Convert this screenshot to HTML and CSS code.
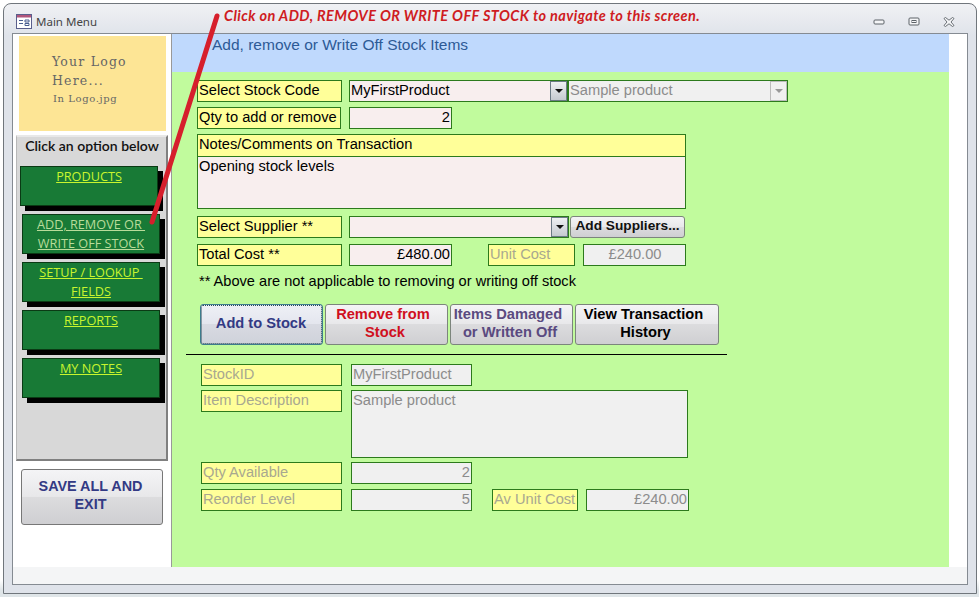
FILE: index.html
```html
<!DOCTYPE html>
<html lang="en">
<head>
<meta charset="utf-8">
<title>Main Menu</title>
<link rel="stylesheet" href="styles.css">
</head>
<body>
<div class="window">
  <header class="titlebar">
    <svg class="app-icon" width="16" height="15" viewBox="0 0 16 15">
      <rect x="0.5" y="0.5" width="15" height="14" fill="#fff" stroke="#5a5f8c"/>
      <rect x="1" y="1" width="14" height="2.5" fill="#b0557c"/>
      <path d="M3 6.5h4M3 9.5h4M9 6h4v2h-4zM9 9.5h4v2h-4z" fill="none" stroke="#4a5f90"/>
    </svg>
    <span class="window-title">Main Menu</span>
    <div class="window-controls">
      <svg width="12" height="6" viewBox="0 0 12 6"><rect x="1" y="1" width="10" height="4" rx="1" fill="#f4f5f7" stroke="#5c6268"/></svg>
      <svg width="12" height="9" viewBox="0 0 12 9"><rect x="1" y="1" width="10" height="7" rx="1" fill="#f4f5f7" stroke="#5c6268"/><rect x="4" y="3.500" width="4" height="2" fill="none" stroke="#5c6268"/></svg>
      <svg width="12" height="10" viewBox="0 0 12 10"><path d="M1 1.500L2.500 .5 6 3.200 9.500 .5 11 1.500 8 5l3 3.500L9.500 9.500 6 6.800 2.500 9.500 1 8.500 4 5z" fill="#f4f5f7" stroke="#5c6268" stroke-width=".9"/></svg>
    </div>
  </header>
  <div class="client">
    <div class="panes">
      <aside class="sidebar">
        <div class="logo">
          <p class="logo-big">Your Logo</p>
          <p class="logo-big">Here...</p>
          <p class="logo-small">In Logo.jpg</p>
        </div>
        <nav class="menu">
          <div class="menu-title">Click an option below</div>
          <a class="menu-btn menu-first">PRODUCTS</a>
          <a class="menu-btn menu-hover">ADD, REMOVE OR&nbsp;<br>WRITE OFF STOCK</a>
          <a class="menu-btn">SETUP / LOOKUP&nbsp;<br>FIELDS</a>
          <a class="menu-btn">REPORTS</a>
          <a class="menu-btn">MY NOTES</a>
        </nav>
        <button class="cmd save">SAVE ALL AND<br>EXIT</button>
      </aside>
      <main class="main">
        <div class="banner">Add, remove or Write Off Stock Items</div>
        <div class="form">
          <div class="row row-1">
            <div class="field label w-label">Select Stock Code</div>
            <div class="field input combo w-combo">MyFirstProduct<span class="drop"></span></div>
            <div class="field off combo w-combo2">Sample product<span class="drop drop-off"></span></div>
          </div>
          <div class="row row-2">
            <div class="field label w-label-s">Qty to add or remove</div>
            <div class="field input num w-num">2</div>
          </div>
          <div class="notes">
            <div class="field label notes-head">Notes/Comments on Transaction</div>
            <div class="field input notes-body">Opening stock levels</div>
          </div>
          <div class="row row-sup">
            <div class="field label w-label">Select Supplier **</div>
            <div class="field input combo w-combo-sup"><span class="drop"></span></div>
            <button class="cmd add-sup">Add Suppliers...</button>
          </div>
          <div class="row row-cost">
            <div class="field label w-label">Total Cost **</div>
            <div class="field input num w-num">£480.00</div>
            <div class="field label dim w-unit">Unit Cost</div>
            <div class="field off centre w-unitval">£240.00</div>
          </div>
          <p class="note">** Above are not applicable to removing or writing off stock</p>
          <div class="actions">
            <button class="cmd act focus">Add to Stock</button>
            <button class="cmd act red">Remove from&nbsp;<br>Stock</button>
            <button class="cmd act purple">Items Damaged&nbsp;<br>or Written Off</button>
            <button class="cmd act black wide">View Transaction&nbsp;<br>History</button>
          </div>
          <hr class="rule">
          <div class="lower">
            <div class="row">
              <div class="field label dim w-l2">StockID</div>
              <div class="field off w-v2">MyFirstProduct</div>
            </div>
            <div class="row row-desc">
              <div class="field label dim w-l2">Item Description</div>
              <div class="field off desc">Sample product</div>
            </div>
            <div class="row row-qty">
              <div class="field label dim w-l2">Qty Available</div>
              <div class="field off num w-v2">2</div>
            </div>
            <div class="row row-re">
              <div class="field label dim w-l2">Reorder Level</div>
              <div class="field off num w-v2">5</div>
              <div class="field label dim w-av">Av Unit Cost</div>
              <div class="field off num w-avval">£240.00</div>
            </div>
          </div>
        </div>
      </main>
      <div class="gutter"></div>
    </div>
    <footer class="status"></footer>
  </div>
</div>
<div class="callout">Click on ADD, REMOVE OR WRITE OFF STOCK to navigate to this screen.</div>
<svg class="arrow" width="979" height="597" viewBox="0 0 979 597"><line x1="217" y1="16" x2="152" y2="222" stroke="#d61f2c" stroke-width="5" stroke-linecap="round"/></svg>
</body>
</html>
```
FILE: styles.css
```css
* { box-sizing: border-box; }
html, body { margin: 0; height: 597px; width: 979px; overflow: hidden; background: #fff; }
body { padding: 3px 2px 3px 3px; font-family: "Liberation Sans", Arial, sans-serif; background: linear-gradient(#fff 0, #fff 580px, #dfe5e8 590px); }
p { margin: 0; }

.window { height: 591px; border: 1px solid #70767c; border-radius: 8px 8px 0 0; background: linear-gradient(#f0f1f4, #dfe3ea 32px, #dfe3ea); padding: 0 8px 8px 8px; display: flex; flex-direction: column; }
.titlebar { height: 29px; flex: none; display: flex; align-items: center; padding: 6px 0 0 4px; }
.app-icon { flex: none; }
.window-title { font: 11.500px "Noto Sans", "Open Sans", sans-serif; color: #444; margin-left: 4px; }
.window-controls { margin-left: auto; display: flex; align-items: center; gap: 23px; padding-right: 13px; }

.client { flex: 1; border: 1px solid #858b92; display: flex; flex-direction: column; background: #fff; min-height: 0; }
.panes { flex: 1; display: flex; min-height: 0; }
.status { height: 17px; flex: none; background: #f4f5f6; }
.gutter { flex: 1; background: #fff; }

.sidebar { width: 158px; flex: none; padding: 2px 0 0 3px; background: #fff; }
.logo { width: 147px; height: 95px; margin-left: 3px; background: #fde595; padding: 16px 0 0 33px; font-family: "DejaVu Serif", serif; color: #666; }
.logo-big { font-size: 12.500px; line-height: 19px; letter-spacing: 1.2px; }
.logo-small { font-size: 10px; line-height: 18px; padding-left: 1px; letter-spacing: .6px; }

.menu { width: 152px; height: 326px; margin-top: 4px; background: #d8d8d8; border-top: 2px solid #e8e8e8; border-right: 2px solid #808080; border-bottom: 2px solid #808080; border-left: 1px solid #b8b8b8; padding-left: 5px; }
.menu-title { font: 600 14px/18px "Lato", "Open Sans", sans-serif; color: #111; text-align: center; margin: 0 0 11px -3px; width: 146px; }
.menu-btn { display: block; width: 138px; height: 40px; margin-bottom: 8px; background: #187a36; border: 1px solid #0a3a14; box-shadow: 5px 5px 0 #000; font: 12.700px/19px "Open Sans", "Lato", sans-serif; color: #c8f52e; text-decoration: underline; text-align: center; }
.menu-first { margin-left: -2px; }
.menu-hover { color: #b9dc9a; }

.cmd { font-family: "Liberation Sans", Arial, sans-serif; font-weight: bold; font-size: 14.670px; line-height: 18px; padding: 0; border: 1px solid #7c857c; border-radius: 3px; background: linear-gradient(#f4f4f6, #e8e8ea 49%, #dcdcde 50%, #cfcfd2); text-align: center; }
.save { display: block; width: 142px; height: 56px; margin: 8px 0 0 5px; font-size: 14.400px; color: #333a84; border-color: #777; padding: 0 3px 4px 0; }

.main { width: 778px; flex: none; background: #c1fb9d; border-left: 1px solid #999; display: flex; flex-direction: column; }
.banner { height: 38px; flex: none; background: #bfd9fd; color: #2d5a96; font-size: 15.500px; line-height: 18px; padding: 2px 0 0 40px; }
.form { padding: 8px 0 0 25px; position: relative; }
.row { display: flex; }
.row-2 { margin-top: 5px; }
.notes { margin-top: 5px; width: 489px; }
.row-sup { margin-top: 7px; }
.row-cost { margin-top: 6px; }

.field { height: 22px; border: 1px solid #2c7a1c; font-size: 14.670px; line-height: 19px; padding-left: 1px; white-space: nowrap; color: #000; position: relative; flex: none; }
.label { background: #ffff99; }
.input { background: #f8eeee; }
.off { background: #f0f0f0; color: #8c8c8c; }
.dim { color: #a8a890; }
.num { text-align: right; padding-right: 1px; }
.centre { text-align: center; }

.w-label { width: 145px; margin-right: 7px; }
.w-label-s { width: 144px; margin-right: 8px; }
.w-combo { width: 219px; }
.w-combo2 { width: 220px; }
.w-combo-sup { width: 220px; margin-right: 1px; }
.w-num { width: 103px; }
.w-unit { width: 87px; margin: 0 8px 0 36px; }
.w-unitval { width: 103px; }

.drop { position: absolute; top: 0; right: 0; width: 17px; height: 20px; background: linear-gradient(#eef0f2, #c5cad0); border: 1px solid #6b7a85; }
.drop::after { content: ""; position: absolute; left: 4px; top: 7px; border-style: solid; border-width: 4px 4px 0; border-color: #111 transparent transparent; }
.drop-off { background: #f0f0f0; border-color: #bbb; }
.drop-off::after { border-top-color: #999; }

.notes-head { height: 23px; width: 100%; line-height: 19px; }
.notes-body { height: 52px; width: 100%; border-top: 0; }
.add-sup { width: 115px; height: 22px; font-size: 13.700px; line-height: 18px; color: #111; padding-bottom: 2px; }

.note { font-size: 14.600px; line-height: 18px; margin: 6px 0 0 2px; color: #000; }
.actions { display: flex; margin: 14px 0 0 3px; gap: 2px; }
.act { width: 123px; height: 41px; padding: 0 3px 5px 0; }
.wide { width: 144px; }
.focus { color: #333a84; border: 1px solid #3d7c8c; outline: 1px dotted #2a4a5a; outline-offset: -2px; background: linear-gradient(#eef0f6, #e4e6ee 49%, #d8dae2 50%, #cfd2da); padding: 0 1px 3px 0; }
.red { color: #d0101e; }
.purple { color: #5a4a80; }
.black { color: #000; }

.rule { margin: 9px 0 0 -11px; width: 541px; height: 1px; border: 0; background: #000; }
.lower { margin: 9px 0 0 4px; }
.w-l2 { width: 141px; margin-right: 9px; }
.w-v2 { width: 121px; }
.row-desc { margin-top: 4px; height: 68px; }
.desc { width: 337px; height: 68px; }
.row-qty { margin-top: 4px; }
.row-re { margin-top: 5px; }
.w-av { width: 86px; margin: 0 8px 0 20px; }
.w-avval { width: 103px; }

.callout { position: absolute; left: 224px; top: 7px; font: italic 700 14.500px/17px "Lato", "Open Sans", sans-serif; letter-spacing: .4px; color: #cf1c22; white-space: nowrap; }
.arrow { position: absolute; left: 0; top: 0; pointer-events: none; }
```
